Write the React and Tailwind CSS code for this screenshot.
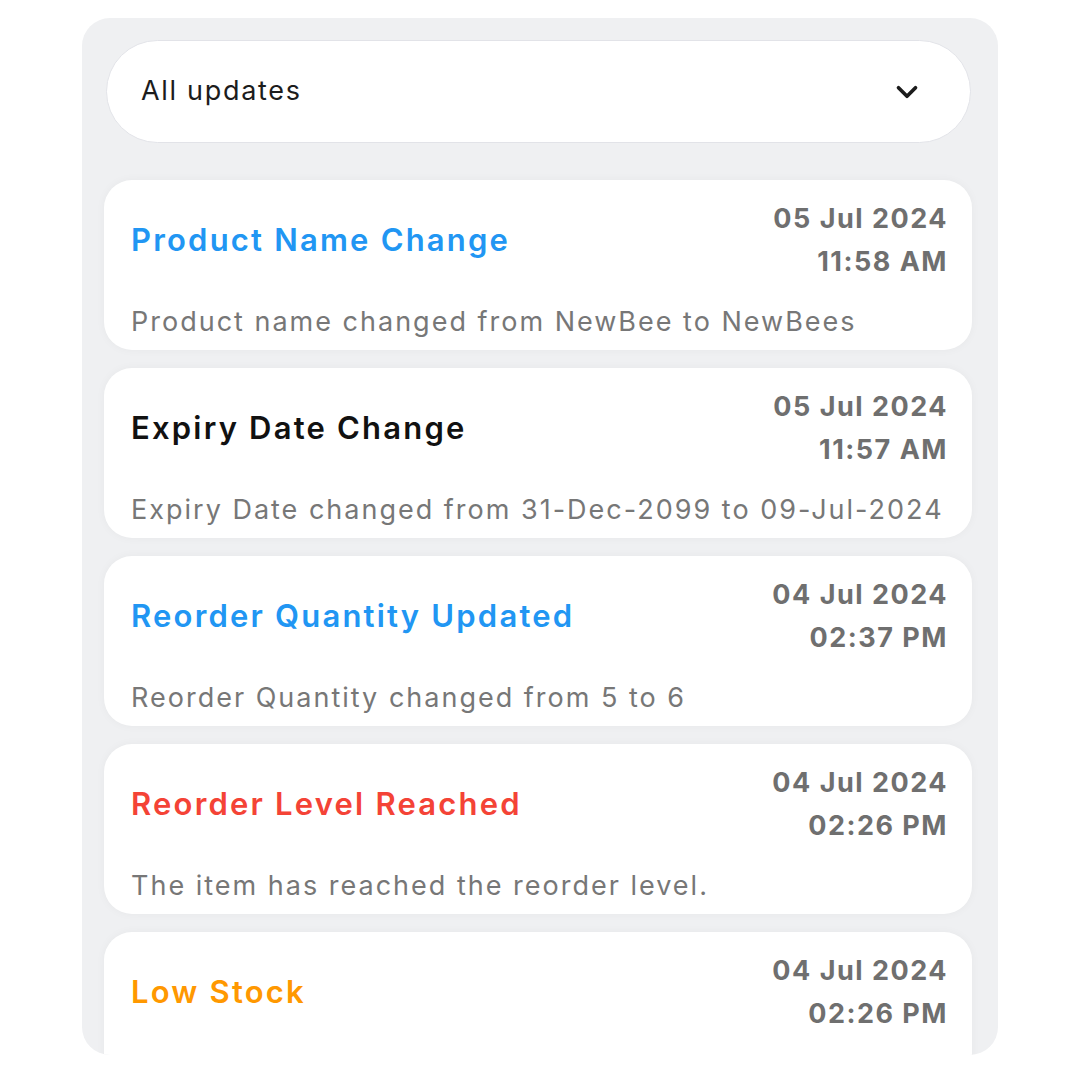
import { ChevronDown } from 'lucide-react'

const updates = [
  {
    id: 1,
    title: 'Product Name Change',
    color: 'text-[#2196f3]',
    date: '05 Jul 2024',
    time: '11:58 AM',
    text: 'Product name changed from NewBee to NewBees',
  },
  {
    id: 2,
    title: 'Expiry Date Change',
    color: 'text-[#111111]',
    date: '05 Jul 2024',
    time: '11:57 AM',
    text: 'Expiry Date changed from 31-Dec-2099 to 09-Jul-2024',
  },
  {
    id: 3,
    title: 'Reorder Quantity Updated',
    color: 'text-[#2196f3]',
    date: '04 Jul 2024',
    time: '02:37 PM',
    text: 'Reorder Quantity changed from 5 to 6',
  },
  {
    id: 4,
    title: 'Reorder Level Reached',
    color: 'text-[#f44336]',
    date: '04 Jul 2024',
    time: '02:26 PM',
    text: 'The item has reached the reorder level.',
  },
  {
    id: 5,
    title: 'Low Stock',
    color: 'text-[#ff9800]',
    date: '04 Jul 2024',
    time: '02:26 PM',
    text: null,
  },
]

export default function App() {
  return (
    <div className="min-h-[1080px] bg-white pt-[18px]" style={{ fontFamily: 'Inter, "Open Sans", sans-serif' }}>
      <div className="mx-[82px] h-[1037px] overflow-hidden rounded-[28px] bg-[#eff0f2] pl-[22px] pr-[26px] pt-[22px]">
        <button className="mx-[2px] flex h-[103px] w-[865px] items-center justify-between rounded-full border border-[#e2e3e8] bg-white pl-[34px] pr-[46px] text-left">
          <span className="text-[27px] tracking-[1.7px] text-[#1c1c1c]">All updates</span>
          <ChevronDown className="h-[34px] w-[34px] text-[#1c1c1c]" strokeWidth={2.6} />
        </button>

        <ul className="mt-[37px] flex flex-col gap-[18px]">
          {updates.map(u => (
            <li
              key={u.id}
              className="h-[170px] shrink-0 rounded-[28px] bg-white pl-[27px] pr-[24px] pt-[17px] shadow-[0_0_10px_rgba(0,0,0,0.04)]"
            >
              <div className="flex items-center justify-between">
                <h3 className={`text-[31px] font-semibold tracking-[2.2px] ${u.color}`}>{u.title}</h3>
                <div className="text-right text-[27px] font-bold leading-[43px] tracking-[1.5px] text-[#6f6f6f]">
                  <p>{u.date}</p>
                  <p>{u.time}</p>
                </div>
              </div>
              {u.text && (
                <p className="mt-[19px] text-[27px] leading-[40px] tracking-[2px] text-[#777777]">{u.text}</p>
              )}
            </li>
          ))}
        </ul>
      </div>
    </div>
  )
}
